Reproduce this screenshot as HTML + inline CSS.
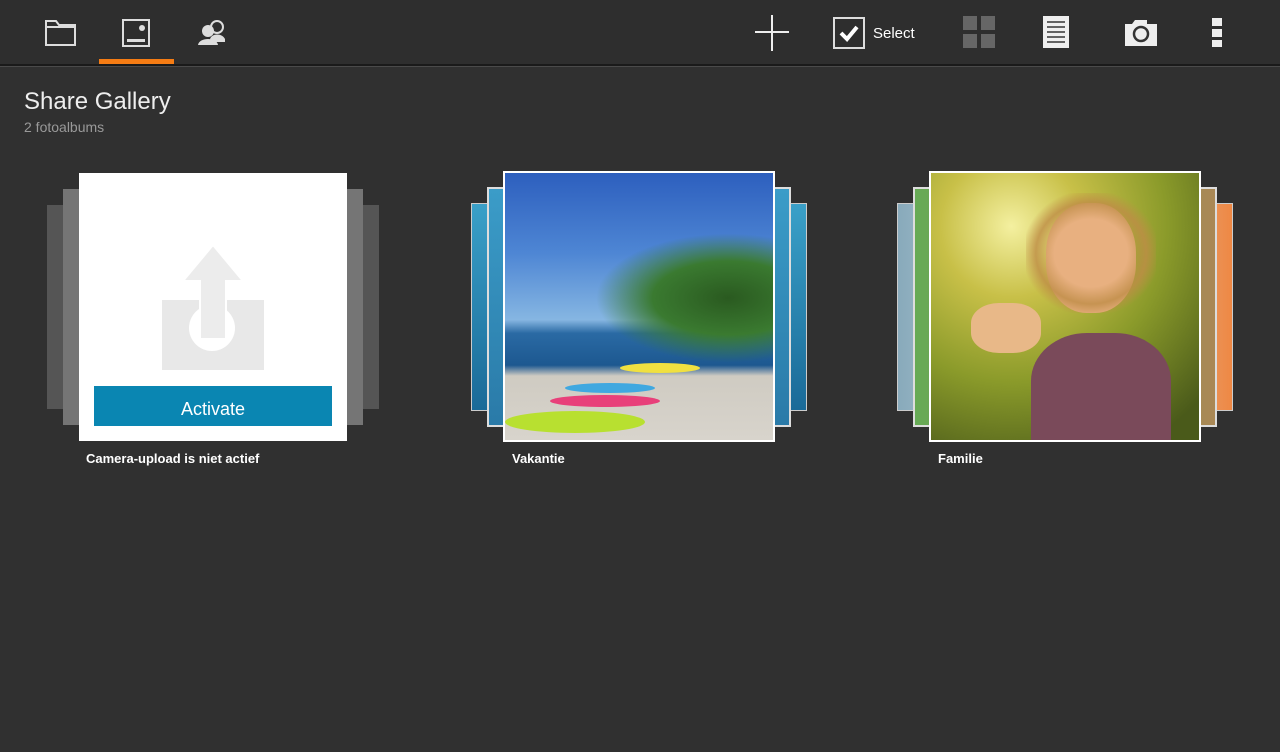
<!DOCTYPE html><html><head><style>
body{margin:0;width:1280px;height:752px;background:#303030;font-family:"Liberation Sans",sans-serif;position:relative;overflow:hidden}
.a{position:absolute}
.top{left:0;top:0;width:1280px;height:64px;background:#2e2e2e;border-bottom:2px solid #1a1a1a}
.t{color:#fff}
</style></head><body>
<div class="a top"></div>
<div class="a" style="left:0;top:66px;width:1280px;height:1px;background:#4a4a4a"></div>
<svg class="a" style="left:44px;top:18px" width="34" height="30"><path d="M2 3h10l3 4h16v20H2z" fill="none" stroke="#ddd" stroke-width="2"/><path d="M2 9h29" stroke="#ddd" stroke-width="2"/></svg>
<svg class="a" style="left:122px;top:19px" width="30" height="30"><rect x="1" y="1" width="26" height="26" fill="none" stroke="#ddd" stroke-width="2"/><circle cx="20" cy="9" r="3" fill="#ddd"/><rect x="5" y="20" width="18" height="3" fill="#ddd"/></svg>
<div class="a" style="left:99px;top:59px;width:75px;height:5px;background:#f57c14"></div>
<svg class="a" style="left:196px;top:19px" width="32" height="28"><circle cx="21" cy="8" r="6" fill="none" stroke="#ddd" stroke-width="2"/><path d="M14 20c2-6 12-6 15 0v3H16" fill="#ddd"/><circle cx="12" cy="12" r="6" fill="#ddd"/><path d="M2 26c1-8 19-8 20 0z" fill="#ddd"/></svg>
<div class="a" style="left:755px;top:31px;width:34px;height:2px;background:#eee"></div>
<div class="a" style="left:771px;top:15px;width:2px;height:36px;background:#eee"></div>
<svg class="a" style="left:832px;top:16px" width="34" height="34"><rect x="2" y="2" width="30" height="30" fill="none" stroke="#ddd" stroke-width="2"/><path d="M9 17l6 6 10-12" fill="none" stroke="#fff" stroke-width="4"/></svg>
<div class="a t" style="left:873px;top:25px;font-size:15px">Select</div>
<div class="a" style="left:963px;top:16px;width:14px;height:14px;background:#666"></div><div class="a" style="left:981px;top:16px;width:14px;height:14px;background:#666"></div>
<div class="a" style="left:963px;top:34px;width:14px;height:14px;background:#666"></div><div class="a" style="left:981px;top:34px;width:14px;height:14px;background:#666"></div>
<svg class="a" style="left:1043px;top:16px" width="28" height="32"><rect width="26" height="32" fill="#eee"/><g stroke="#333" stroke-width="1.5"><path d="M4 6h18M4 11h18M4 16h18M4 21h18M4 26h18"/></g></svg>
<svg class="a" style="left:1124px;top:18px" width="34" height="28"><path d="M1 6h7l3-4h12v4h10v22H1z" fill="#eee"/><circle cx="17" cy="16" r="7" fill="none" stroke="#333" stroke-width="2.5"/></svg>
<div class="a" style="left:1212px;top:18px;width:10px;height:8px;background:#eee"></div>
<div class="a" style="left:1212px;top:29px;width:10px;height:8px;background:#eee"></div>
<div class="a" style="left:1212px;top:40px;width:10px;height:7px;background:#eee"></div>
<div class="a t" style="left:24px;top:88px;font-size:24px;color:#eee">Share Gallery</div>
<div class="a" style="left:24px;top:119px;font-size:14px;color:#999">2 fotoalbums</div>
<div class="a" style="left:47px;top:205px;width:332px;height:204px;background:#555"></div>
<div class="a" style="left:63px;top:189px;width:300px;height:236px;background:#757575"></div>
<div class="a" style="left:79px;top:173px;width:268px;height:268px;background:#fff"></div>
<svg class="a" style="left:160px;top:243px" width="106" height="128"><rect x="2" y="57" width="102" height="70" fill="#e8e8e8"/><circle cx="52" cy="85" r="23" fill="#fff"/><path d="M53 2l30 36H66v58H40V38H23z" fill="#ececec" stroke="#fff" stroke-width="2"/></svg>
<div class="a" style="left:94px;top:386px;width:238px;height:40px;background:#0a86b2;color:#fff;font-size:18px;text-align:center;line-height:46px">Activate</div>
<div class="a t" style="left:86px;top:451px;font-size:13px;font-weight:bold">Camera-upload is niet actief</div>
<div class="a" style="left:471px;top:203px;width:336px;height:208px;background:linear-gradient(#3aa0c8,#1a6a98);border:1px solid #ccc;box-sizing:border-box"></div>
<div class="a" style="left:487px;top:187px;width:304px;height:240px;background:linear-gradient(#3b9cc8,#2a7aa8);border:2px solid #ddd;box-sizing:border-box"></div>
<div class="a" style="left:503px;top:171px;width:272px;height:271px;border:2px solid #fff;box-sizing:border-box;overflow:hidden;background:linear-gradient(#2d5fbe 0%,#4e86d4 30%,#86b6e2 55%,#2a6aa4 60%,#1d5890 72%,#cfcbc2 76%,#d8d4cc 100%)">
<div class="a" style="left:90px;top:60px;width:190px;height:130px;background:radial-gradient(ellipse at 70% 50%,#2a5a20 0,#3a7a30 40%,rgba(60,110,50,0) 70%)"></div>
<div class="a" style="left:60px;top:210px;width:90px;height:10px;background:#40a8e0;border-radius:50%"></div>
<div class="a" style="left:45px;top:222px;width:110px;height:12px;background:#e8407a;border-radius:50%"></div>
<div class="a" style="left:0;top:238px;width:140px;height:22px;background:#b8e030;border-radius:50%"></div>
<div class="a" style="left:115px;top:190px;width:80px;height:10px;background:#f0e040;border-radius:50%"></div>
</div>
<div class="a t" style="left:512px;top:451px;font-size:13px;font-weight:bold">Vakantie</div>
<div class="a" style="left:897px;top:203px;width:336px;height:208px;background:linear-gradient(90deg,#8ab 0,#d8e0e8 50%,#e84 100%);border:1px solid #ccc;box-sizing:border-box"></div>
<div class="a" style="left:913px;top:187px;width:304px;height:240px;background:linear-gradient(90deg,#6a5 0,#a85 100%);border:2px solid #ddd;box-sizing:border-box"></div>
<div class="a" style="left:929px;top:171px;width:272px;height:271px;border:2px solid #fff;box-sizing:border-box;overflow:hidden;background:radial-gradient(circle at 30% 20%,#f4f0a0 0,#c8c048 25%,#8a9a2a 55%,#4a5a1a 90%)">
<div class="a" style="left:115px;top:30px;width:90px;height:110px;background:#e8b080;border-radius:45%"></div>
<div class="a" style="left:95px;top:20px;width:130px;height:120px;background:radial-gradient(ellipse,rgba(200,150,80,0) 40%,rgba(190,140,70,.8) 60%,rgba(0,0,0,0) 75%)"></div>
<div class="a" style="left:100px;top:160px;width:140px;height:120px;background:#7a4a5a;border-radius:40% 40% 0 0"></div>
<div class="a" style="left:40px;top:130px;width:70px;height:50px;background:#e8b888;border-radius:40%"></div>
</div>
<div class="a t" style="left:938px;top:451px;font-size:13px;font-weight:bold">Familie</div>
</body></html>
